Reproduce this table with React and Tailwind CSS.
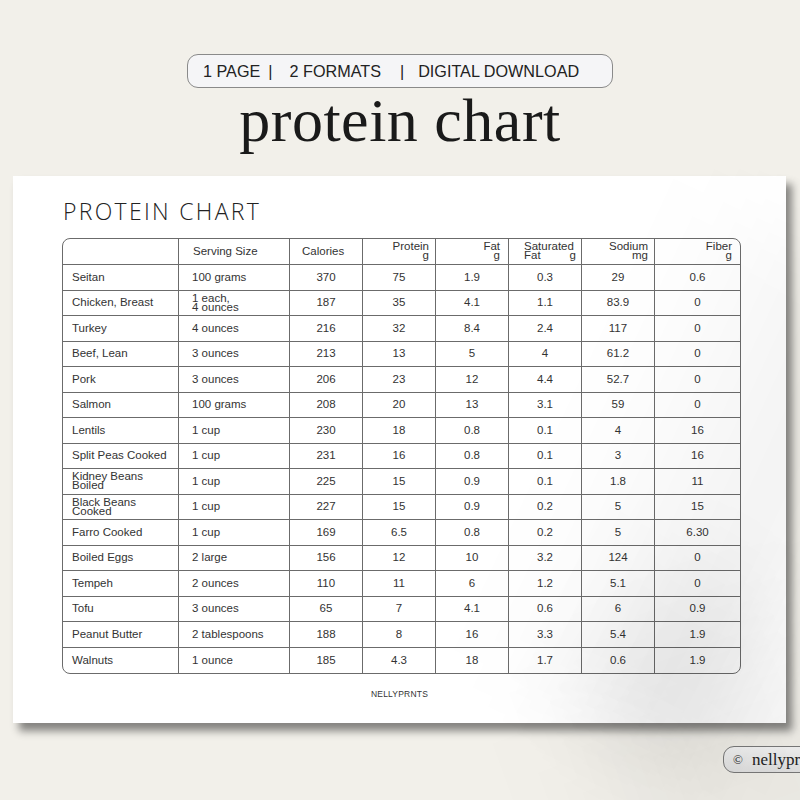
import React from 'react';

const rows = [
  ['Seitan', '100 grams', '370', '75', '1.9', '0.3', '29', '0.6'],
  [['Chicken, Breast'], ['1 each,', '4 ounces'], '187', '35', '4.1', '1.1', '83.9', '0'],
  ['Turkey', '4 ounces', '216', '32', '8.4', '2.4', '117', '0'],
  ['Beef, Lean', '3 ounces', '213', '13', '5', '4', '61.2', '0'],
  ['Pork', '3 ounces', '206', '23', '12', '4.4', '52.7', '0'],
  ['Salmon', '100 grams', '208', '20', '13', '3.1', '59', '0'],
  ['Lentils', '1 cup', '230', '18', '0.8', '0.1', '4', '16'],
  ['Split Peas Cooked', '1 cup', '231', '16', '0.8', '0.1', '3', '16'],
  [['Kidney Beans', 'Boiled'], '1 cup', '225', '15', '0.9', '0.1', '1.8', '11'],
  [['Black Beans', 'Cooked'], '1 cup', '227', '15', '0.9', '0.2', '5', '15'],
  ['Farro Cooked', '1 cup', '169', '6.5', '0.8', '0.2', '5', '6.30'],
  ['Boiled Eggs', '2 large', '156', '12', '10', '3.2', '124', '0'],
  ['Tempeh', '2 ounces', '110', '11', '6', '1.2', '5.1', '0'],
  ['Tofu', '3 ounces', '65', '7', '4.1', '0.6', '6', '0.9'],
  ['Peanut Butter', '2 tablespoons', '188', '8', '16', '3.3', '5.4', '1.9'],
  ['Walnuts', '1 ounce', '185', '4.3', '18', '1.7', '0.6', '1.9'],
];

const TwoLine = ({ lines }) => (
  <div className="flex flex-col leading-[9px]">
    {lines.map((l) => (
      <span key={l}>{l}</span>
    ))}
  </div>
);

const Cell = ({ children, col, last, className = '' }) => (
  <div
    className={
      'flex items-center border-[#6b6b6b] ' +
      (col < 7 ? 'border-r ' : '') +
      (last ? '' : 'border-b ') +
      className
    }
  >
    {children}
  </div>
);

const HeadUnit = ({ name, unit, pr }) => (
  <div className={'flex flex-col items-end w-full self-start pt-[3px] leading-[9px] ' + pr}>
    <span>{name}</span>
    <span>{unit}</span>
  </div>
);

export default function App() {
  return (
    <div className="relative w-[800px] h-[800px] overflow-hidden bg-[#f2f0ea] font-['Liberation_Sans',sans-serif]">
      <div className="flex flex-col items-center">
        <div className="mt-[54px] w-[426px] h-[34px] rounded-[11px] border border-[#8a8a8a] bg-[#f5f5f7] flex items-center pl-[15px] text-[16.2px] text-[#222] whitespace-nowrap">
          <span>1 PAGE</span>
          <span className="ml-[8px]">|</span>
          <span className="ml-[17px]">2 FORMATS</span>
          <span className="ml-[19px]">|</span>
          <span className="ml-[14px]">DIGITAL DOWNLOAD</span>
        </div>
        <h1 className="mt-[1px] text-[62px] leading-none font-['Liberation_Serif',serif] text-[#1a1a1a] tracking-[0.5px]">
          protein chart
        </h1>
      </div>

      <div className="relative ml-[13px] mt-[25px] w-[773px] h-[547px] bg-white shadow-[6px_8px_8px_rgba(0,0,0,0.45)] flex flex-col">
        <h2 className="ml-[50px] mt-[24px] text-[23px] leading-none font-light tracking-[2.3px] text-[#222] font-['Open_Sans',sans-serif]">
          PROTEIN CHART
        </h2>

        <div className="ml-[49px] mt-[15px] w-[679px] h-[436px] rounded-[8px] border border-[#6b6b6b] overflow-hidden text-[11.5px] text-[#333]">
          <div className="grid h-full grid-cols-[116px_111px_73px_73px_73px_73px_73px_85px] grid-rows-[26px_repeat(16,minmax(0,1fr))]">
            <Cell col={0} />
            <Cell col={1} className="pl-[14px]">Serving Size</Cell>
            <Cell col={2} className="pl-[12px]">Calories</Cell>
            <Cell col={3}><HeadUnit name="Protein" unit="g" pr="pr-[6px]" /></Cell>
            <Cell col={4}><HeadUnit name="Fat" unit="g" pr="pr-[8px]" /></Cell>
            <Cell col={5}>
              <div className="self-start pt-[3px] pl-[15px] pr-[5px] w-full flex flex-col leading-[9px]">
                <span>Saturated</span>
                <span className="flex justify-between"><span>Fat</span><span>g</span></span>
              </div>
            </Cell>
            <Cell col={6}><HeadUnit name="Sodium" unit="mg" pr="pr-[6px]" /></Cell>
            <Cell col={7}><HeadUnit name="Fiber" unit="g" pr="pr-[8px]" /></Cell>

            {rows.map((r, i) => {
              const last = i === rows.length - 1;
              return r.map((v, c) => (
                <Cell
                  key={i + '-' + c}
                  col={c}
                  last={last}
                  className={c === 0 ? 'pl-[9px]' : c === 1 ? 'pl-[13px]' : 'justify-center'}
                >
                  {Array.isArray(v) ? (v.length > 1 ? <TwoLine lines={v} /> : v[0]) : v}
                </Cell>
              ));
            })}
          </div>
        </div>

        <div className="mt-[14px] text-center text-[8.5px] text-[#333] tracking-[0.2px]">NELLYPRNTS</div>

        <div className="pointer-events-none absolute right-[-40px] top-[40px] w-[260px] h-[520px] rotate-[25deg] bg-gradient-to-l from-black/[0.06] to-transparent blur-2xl" />
        <div className="pointer-events-none absolute right-[60px] bottom-[-30px] w-[120px] h-[200px] rotate-[30deg] bg-black/[0.04] blur-2xl" />
      </div>

      <div className="mt-[23px] ml-[723px] w-[120px] h-[27px] rounded-[11px] border border-[#7a7a7a] bg-gradient-to-b from-[#f4f4f4] to-[#e2e2e2] flex items-center pl-[9px] whitespace-nowrap font-['Liberation_Serif',serif] text-[17px] text-[#222]">
        <span className="text-[13px] mr-[9px]">©</span>
        <span>nellyprnts</span>
      </div>

      <div className="pointer-events-none absolute right-[-60px] bottom-[-60px] w-[240px] h-[200px] rotate-[-20deg] bg-black/[0.05] blur-3xl" />
    </div>
  );
}
